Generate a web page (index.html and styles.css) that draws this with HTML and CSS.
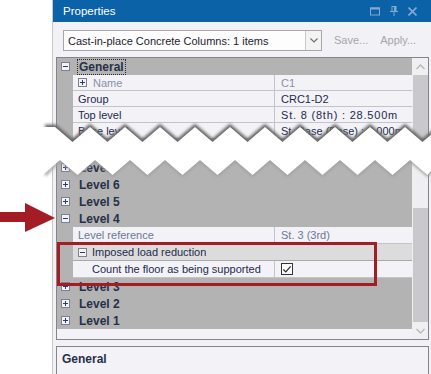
FILE: index.html
```html
<!DOCTYPE html>
<html>
<head>
<meta charset="utf-8">
<link rel="stylesheet" href="styles.css">
</head>
<body>
<div class="stage">
  <div class="gutter"></div>
  <div class="panel">
    <div class="titlebar">
      <span class="title">Properties</span>
      <span class="tb-icons">
        <svg width="10" height="9" viewBox="0 0 10 9"><rect x="0.5" y="1" width="9" height="7" fill="none" stroke="#84a9d2" stroke-width="1"/><rect x="0" y="0.5" width="10" height="2" fill="#84a9d2"/></svg>
        <svg width="8" height="10" viewBox="0 0 8 10"><rect x="2" y="0.5" width="4" height="5" fill="none" stroke="#84a9d2"/><rect x="4" y="1" width="2" height="4.5" fill="#84a9d2"/><rect x="0" y="5" width="8" height="1" fill="#84a9d2"/><rect x="3.5" y="6" width="1" height="4" fill="#84a9d2"/></svg>
        <svg width="9" height="9" viewBox="0 0 9 9"><path d="M0.5 0.5 L8.5 8.5 M8.5 0.5 L0.5 8.5" stroke="#84a9d2" stroke-width="1.6"/></svg>
      </span>
    </div>
    <div class="toolbar">
      <div class="combo">
        <span class="combo-text">Cast-in-place Concrete Columns: 1 items</span>
        <span class="combo-btn"><svg width="8" height="5" viewBox="0 0 8 5"><path d="M0.5 0.5 L4 4 L7.5 0.5" fill="none" stroke="#6f6f6f" stroke-width="1.2"/></svg></span>
      </div>
      <span class="tbtn">Save...</span>
      <span class="tbtn">Apply...</span>
    </div>
    <div class="grid">
      <div class="rows">
        <div class="cat"><span class="box minus"></span><span class="cat-text focus">General</span></div>
        <div class="row"><span class="indent"></span><span class="name ro"><span class="box small plus"></span>Name</span><span class="val ro">C1</span></div>
        <div class="row"><span class="indent"></span><span class="name">Group</span><span class="val">CRC1-D2</span></div>
        <div class="row"><span class="indent"></span><span class="name">Top level</span><span class="val wide">St. 8 (8th) : 28.500m</span></div>
        <div class="row"><span class="indent"></span><span class="name">Base level</span><span class="val">St. Base (Base) : 0.000m</span></div>
        <div class="spacer"><div class="spacer-top"><span class="indent"></span><span class="name"></span><span class="val"></span></div><div class="spacer-bot"></div></div>
        <div class="cat tall"><span class="box plus"></span><span class="cat-text">Level 7</span></div>
        <div class="cat tall"><span class="box plus"></span><span class="cat-text">Level 6</span></div>
        <div class="cat tall"><span class="box plus"></span><span class="cat-text">Level 5</span></div>
        <div class="cat tall"><span class="box minus"></span><span class="cat-text">Level 4</span></div>
        <div class="row tall"><span class="indent"></span><span class="name ro2">Level reference</span><span class="val ro2">St. 3 (3rd)</span></div>
        <div class="row tall sub"><span class="indent"></span><span class="subcat"><span class="box minus"></span>Imposed load reduction</span></div>
        <div class="row tall"><span class="indent"></span><span class="name deep">Count the floor as being supported</span><span class="val"><span class="check"><svg width="11" height="11" viewBox="0 0 11 11"><path d="M1.5 5.5 L4.2 8.2 L9.5 2" fill="none" stroke="#2b2b2b" stroke-width="1.3"/></svg></span></span></div>
        <div class="cat tall"><span class="box plus"></span><span class="cat-text">Level 3</span></div>
        <div class="cat tall"><span class="box plus"></span><span class="cat-text">Level 2</span></div>
        <div class="cat tall"><span class="box plus"></span><span class="cat-text">Level 1</span></div>
      </div>
      <div class="scroll">
        <div class="sb-arrow"><svg width="9" height="6" viewBox="0 0 9 6"><path d="M0.5 5 L4.5 1 L8.5 5" fill="none" stroke="#b9b9b9" stroke-width="1.4"/></svg></div>
        <div class="sb-thumb one"></div>
        <div class="sb-track"></div>
        <div class="sb-thumb two"></div>
        <div class="sb-arrow down"><svg width="9" height="6" viewBox="0 0 9 6"><path d="M0.5 1 L4.5 5 L8.5 1" fill="none" stroke="#b9b9b9" stroke-width="1.4"/></svg></div>
      </div>
    </div>
    <div class="desc"><span class="desc-title">General</span></div>
  </div>

  <svg class="tear" width="431" height="64" viewBox="0 0 431 64">
    <defs>
      <filter id="blur" x="-10%" y="-50%" width="120%" height="200%"><feGaussianBlur stdDeviation="1.8"/></filter>
    </defs>
    <polyline filter="url(#blur)" fill="none" stroke="#666666" stroke-width="5" points="45,7 55,7 72.5,22 90,7 107.5,22 125,7 142.5,22 160,7 177.5,22 195,7 212.5,22 230,7 247.5,22 265,7 282.5,22 300,7 317.5,22 335,7 352.5,22 370,7 387.5,22 405,7 422.5,22 440,7"/>
    <polyline filter="url(#blur)" fill="none" stroke="#a0a0a0" stroke-width="3" points="45,55 60,40 77.5,55 95,40 112.5,55 130,40 147.5,55 165,40 182.5,55 200,40 217.5,55 235,40 252.5,55 270,40 287.5,55 305,40 322.5,55 340,40 357.5,55 375,40 392.5,55 410,40 427.5,55 445,40"/>
    <polygon fill="#ffffff" points="0,7 55,7 72.5,22 90,7 107.5,22 125,7 142.5,22 160,7 177.5,22 195,7 212.5,22 230,7 247.5,22 265,7 282.5,22 300,7 317.5,22 335,7 352.5,22 370,7 387.5,22 405,7 422.5,22 440,7 440,40 427.5,55 410,40 392.5,55 375,40 357.5,55 340,40 322.5,55 305,40 287.5,55 270,40 252.5,55 235,40 217.5,55 200,40 182.5,55 165,40 147.5,55 130,40 112.5,55 95,40 77.5,55 60,40 42.5,55 0,55"/>
  </svg>

  <svg class="arrow" width="56" height="30" viewBox="0 0 56 30"><rect x="0" y="9" width="26" height="10" fill="#a51d24"/><polygon points="25,0 55,15 25,29" fill="#a51d24"/></svg>
  <div class="highlight"></div>
</div>
</body>
</html>
```

FILE: styles.css
```css
* { box-sizing: border-box; }
body {
  margin: 0;
  background: #ffffff;
  font-family: "Liberation Sans", Arial, sans-serif;
  font-size: 11px;
  color: #1f2a4d;
}
.stage {
  position: relative;
  display: flex;
  width: 431px;
  height: 374px;
  overflow: hidden;
}
.gutter { width: 52px; flex: none; }
.panel {
  flex: 1;
  border-left: 1px solid #c6c6cc;
  background: #f1f1f6;
  display: flex;
  flex-direction: column;
}
.titlebar {
  height: 22px;
  flex: none;
  background: #0b62a6;
  color: #ffffff;
  display: flex;
  align-items: center;
  justify-content: space-between;
  padding: 0 14px 0 10px;
  font-size: 11.5px;
}
.tb-icons { display: flex; align-items: center; gap: 10px; }
.tb-icons svg { display: block; }
.toolbar {
  height: 35px;
  flex: none;
  display: flex;
  align-items: flex-start;
  padding: 8px 0 0 10px;
}
.combo {
  width: 259px;
  height: 21px;
  background: #fdfdfd;
  border: 1px solid #a7a7ab;
  display: flex;
  align-items: center;
}
.combo-text { flex: 1; padding-left: 4px; color: #1f2230; }
.combo-btn {
  width: 16px;
  height: 100%;
  border-left: 1px solid #c9c9cc;
  background: #f3f3f3;
  display: flex;
  align-items: center;
  justify-content: center;
}
.combo-btn svg { display: block; }
.tbtn {
  margin-left: 12px;
  height: 21px;
  line-height: 21px;
  color: #a6a6a8;
}
.grid {
  margin: 0 2px 0 3px;
  height: 283px;
  flex: none;
  border: 1px solid #858589;
  background: #f2f2f7;
  display: flex;
}
.rows { width: 355px; display: flex; flex-direction: column; }
.cat {
  height: 17px;
  background: #b3b3b3;
  display: flex;
  align-items: center;
  padding-left: 4px;
  font-weight: bold;
  font-size: 12px;
  color: #283049;
}
.cat-text { margin-left: 9px; line-height: 14px; }
.focus { outline: 1px dotted #2a2a2a; outline-offset: 0; padding: 0 1px; margin-left: 8px; }
.box {
  width: 9px;
  height: 9px;
  flex: none;
  border: 1px solid #7c808f;
  background: #f3f3f5;
  position: relative;
  display: inline-block;
}
.box::before {
  content: "";
  position: absolute;
  left: 1px;
  top: 3px;
  width: 5px;
  height: 1px;
  background: #2d3a78;
}
.box.plus::after {
  content: "";
  position: absolute;
  left: 3px;
  top: 1px;
  width: 1px;
  height: 5px;
  background: #2d3a78;
}
.box.small { margin-right: 6px; vertical-align: -1px; }
.row { height: 16px; display: flex; flex: none; }
.row.tall { height: 17px; }
.indent { width: 16px; flex: none; background: #b3b3b3; }
.name {
  width: 201px;
  flex: none;
  padding-left: 5px;
  border-bottom: 1px solid #c3c3c9;
  background: #f2f2f7;
  display: flex;
  align-items: center;
  white-space: nowrap;
}
.val {
  flex: 1;
  padding-left: 6px;
  border-left: 1px solid #c3c3c9;
  border-bottom: 1px solid #c3c3c9;
  background: #f2f2f7;
  display: flex;
  align-items: center;
  white-space: nowrap;
  overflow: hidden;
}
.val.wide { letter-spacing: 0.8px; }
.ro { color: #8a90a6; }
.ro2 { color: #6d7895; }
.name.deep { padding-left: 19px; }
.subcat {
  flex: 1;
  background: #dcdcdd;
  border-bottom: 1px solid #a9a9ad;
  display: flex;
  align-items: center;
  padding-left: 5px;
  gap: 5px;
}
.check {
  width: 12px;
  height: 12px;
  border: 1px solid #333333;
  background: #fafafa;
  display: flex;
  align-items: center;
  justify-content: center;
}
.check svg { display: block; }
.spacer { height: 20px; flex: none; display: flex; flex-direction: column; }
.spacer-top { height: 10px; display: flex; }
.spacer-top .name, .spacer-top .val { border-bottom: 0; }
.spacer-bot { flex: 1; background: #b3b3b3; }
.scroll {
  width: 16px;
  display: flex;
  flex-direction: column;
  background: #efeff1;
}
.sb-arrow {
  height: 17px;
  flex: none;
  display: flex;
  align-items: center;
  justify-content: center;
  background: #f0f0f2;
}
.sb-arrow.down { height: 16px; margin-top: auto; }
.sb-arrow svg { display: block; }
.sb-thumb { background: #c9c9cb; margin-left: 1px; flex: none; }
.sb-thumb.one { height: 75px; }
.sb-track { height: 58px; flex: none; }
.sb-thumb.two { height: 114px; }
.desc {
  margin: 6px 2px 0 3px;
  flex: 1;
  border: 1px solid #858589;
  border-bottom: 0;
  background: #f2f2f7;
  padding: 5px 5px;
}
.desc-title { font-weight: bold; font-size: 12px; color: #283049; }
.tear { position: absolute; left: 0; top: 120px; }
.arrow { position: absolute; left: 0; top: 203px; }
.highlight {
  position: absolute;
  left: 57px;
  top: 242px;
  width: 320px;
  height: 44px;
  border: 3px solid #a51d24;
}
```
